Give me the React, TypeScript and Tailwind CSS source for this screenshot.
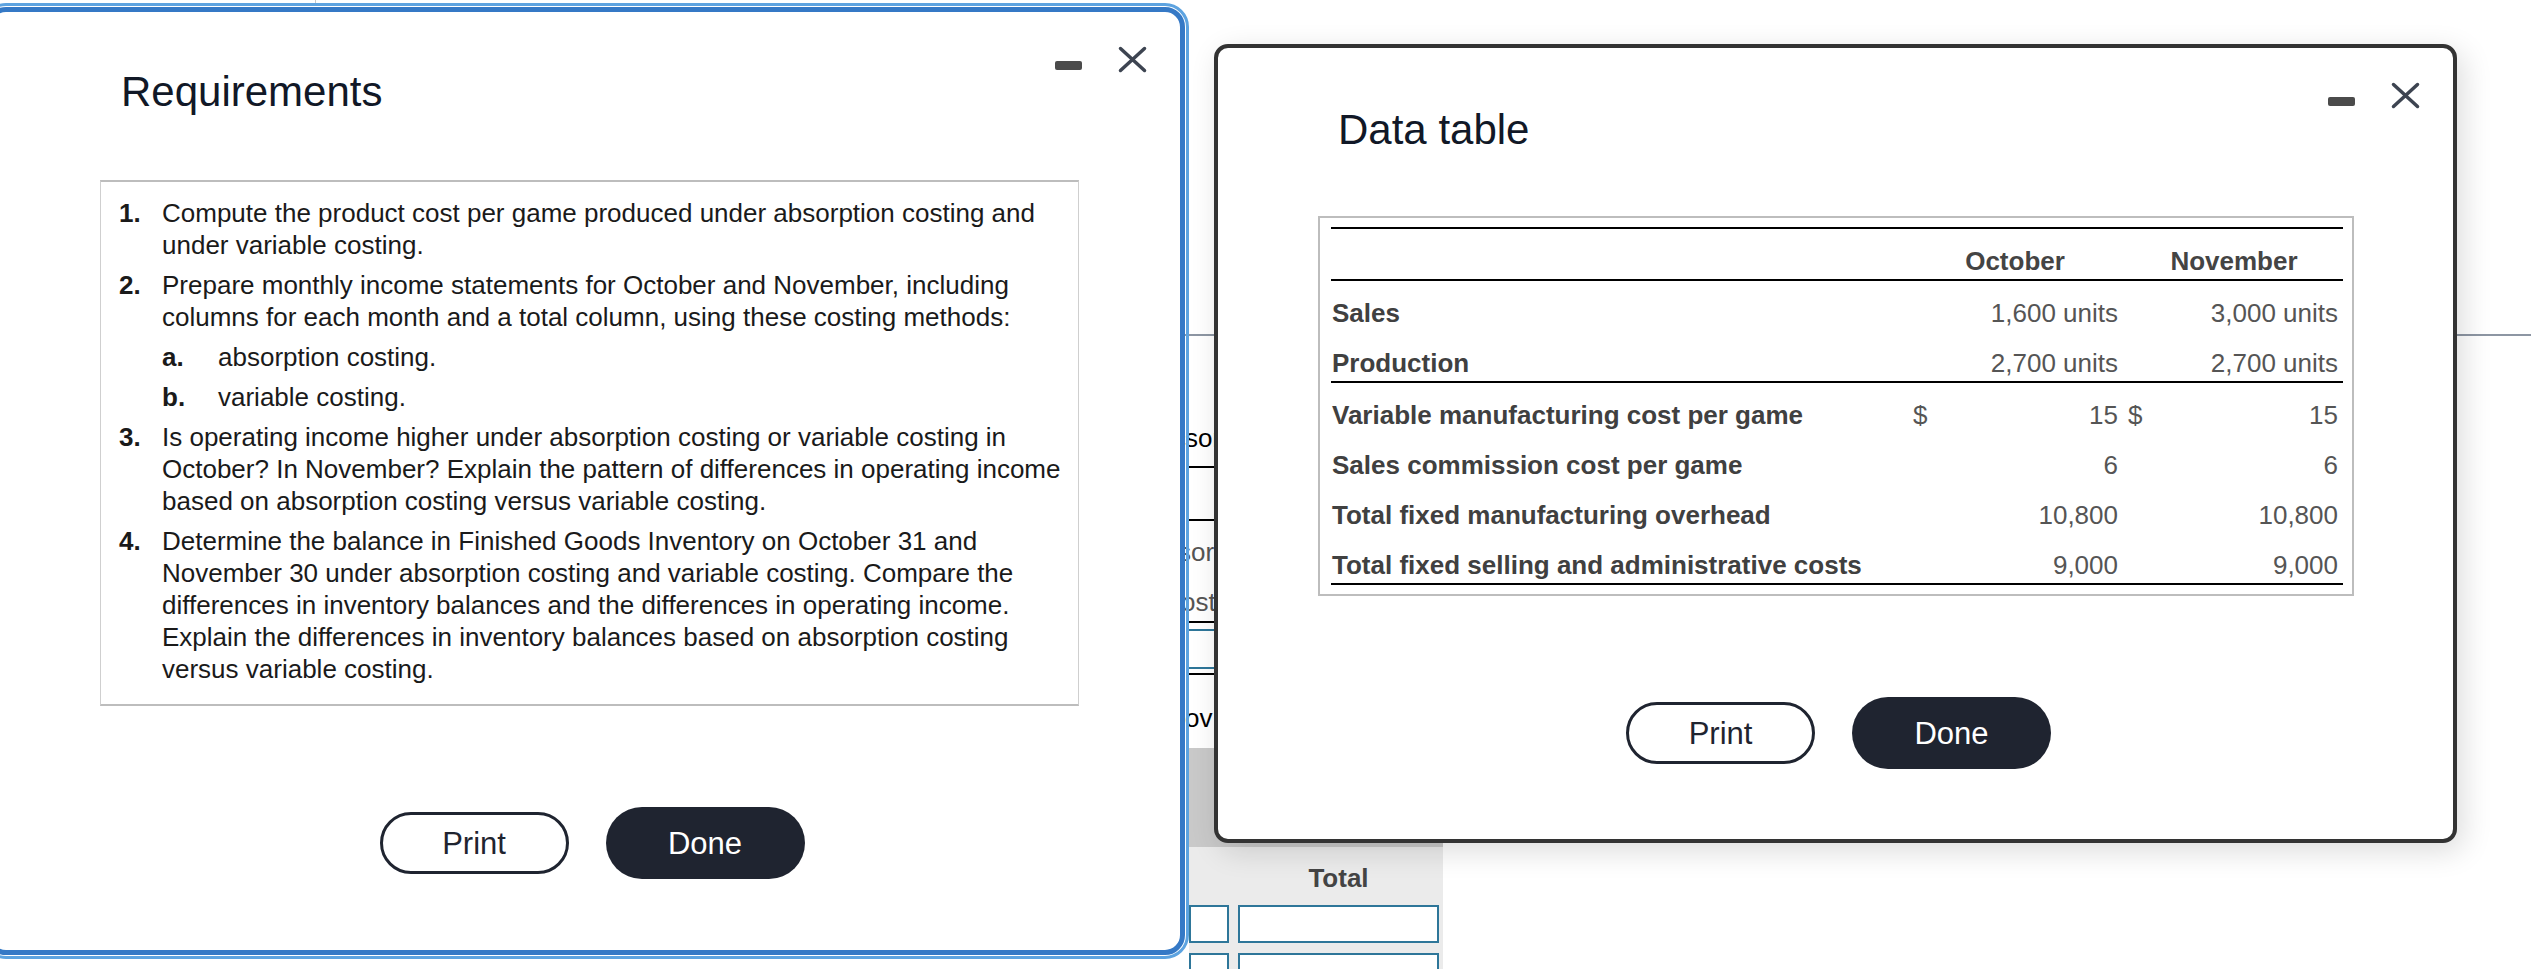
import React from 'react'

const REQUIREMENTS = [
  {
    n: '1.',
    text: 'Compute the product cost per game produced under absorption costing and under variable costing.',
  },
  {
    n: '2.',
    text: 'Prepare monthly income statements for October and November, including columns for each month and a total column, using these costing methods:',
    sub: [
      ['a.', 'absorption costing.'],
      ['b.', 'variable costing.'],
    ],
  },
  {
    n: '3.',
    text: 'Is operating income higher under absorption costing or variable costing in October? In November? Explain the pattern of differences in operating income based on absorption costing versus variable costing.',
  },
  {
    n: '4.',
    text: 'Determine the balance in Finished Goods Inventory on October 31 and November 30 under absorption costing and variable costing. Compare the differences in inventory balances and the differences in operating income. Explain the differences in inventory balances based on absorption costing versus variable costing.',
  },
]

const ROWS = [
  { label: 'Sales', oct: '1,600 units', nov: '3,000 units' },
  { label: 'Production', oct: '2,700 units', nov: '2,700 units', rule: true },
  { label: 'Variable manufacturing cost per game', oct: '15', nov: '15', dollar: true },
  { label: 'Sales commission cost per game', oct: '6', nov: '6' },
  { label: 'Total fixed manufacturing overhead', oct: '10,800', nov: '10,800' },
  { label: 'Total fixed selling and administrative costs', oct: '9,000', nov: '9,000' },
]

function CloseIcon() {
  return (
    <svg width="29" height="27" viewBox="0 0 29 27" fill="none" stroke="#3d4451" strokeWidth="3.5" strokeLinecap="round">
      <path d="M2.5 2.5 L26.5 24.5 M26.5 2.5 L2.5 24.5" />
    </svg>
  )
}

function Buttons({ shift }: { shift: string }) {
  return (
    <div className={`flex items-center justify-center gap-[37px] ${shift}`}>
      <button className="h-[62px] w-[189px] rounded-full border-[3px] border-[#1f2430] bg-white text-[31px] leading-none text-[#1f2430]">
        Print
      </button>
      <button className="h-[72px] w-[199px] rounded-full bg-[#1f2430] text-[31px] leading-none text-white">
        Done
      </button>
    </div>
  )
}

function Background() {
  return (
    <div className="flex h-full flex-col">
      <div className="h-[334px] shrink-0">
        <div className="ml-[315px] h-[3px] w-px bg-[#c8c8c8]" />
      </div>
      <div className="h-[2px] shrink-0 bg-[#8d96a3]" />
      <div className="flex flex-1">
        <div className="flex w-[1189px] shrink-0 flex-col justify-end">
          <div className="flex h-[9px]">
            <div className="ml-[315px] w-px bg-[#c8c8c8]" />
            <div className="ml-[37px] w-[391px] border-x-2 border-t-2 border-[#2e7699]" />
            <div className="ml-[2px] w-[2px] bg-[#9bb8c9]" />
            <div className="ml-[5px] w-[2px] bg-[#9bb8c9]" />
            <div className="ml-[226px] w-[2px] bg-[#9bb8c9]" />
            <div className="ml-[6px] w-[2px] bg-[#9bb8c9]" />
          </div>
        </div>
        <div className="flex w-[254px] shrink-0 flex-col text-[26px] leading-[30px]">
          <div className="-ml-[4px] mt-[87px] text-black">son</div>
          <div className="mt-[13px] h-[2px] bg-black" />
          <div className="mt-[51px] h-[2px] bg-black" />
          <div className="-ml-[11px] mt-[16px] text-[#555]">sor</div>
          <div className="-ml-[21px] mt-[20px] text-[#555]">cost</div>
          <div className="mt-[4px] h-[2px] bg-black" />
          <div className="mt-[6px] h-[2px] bg-[#2e7699]" />
          <div className="mt-[36px] h-[2px] bg-[#2e7699]" />
          <div className="mt-[4px] h-[2px] bg-black" />
          <div className="-ml-[4px] mt-[28px] text-black">ov</div>
          <div className="mt-[15px] h-[99px] bg-[#c9c9c9]" />
          <div className="flex flex-1 bg-[#ebebeb]">
            <div className="flex w-[49px] flex-col gap-[10px] pt-[58px]">
              <div className="h-[38px] w-[40px] border-2 border-[#2e7699] bg-white" />
              <div className="h-[38px] w-[40px] border-2 border-[#2e7699] bg-white" />
            </div>
            <div className="flex w-[201px] flex-col">
              <div className="pt-[16px] text-center font-bold text-[#444]">Total</div>
              <div className="mt-[12px] h-[38px] border-2 border-[#2e7699] bg-white" />
              <div className="mt-[10px] h-[38px] border-2 border-[#2e7699] bg-white" />
            </div>
          </div>
        </div>
      </div>
    </div>
  )
}

function RequirementsDialog() {
  return (
    <div className="absolute left-[-14px] top-[7px] h-[948px] w-[1199px] rounded-[20px] border-[5px] border-[#3579c6] bg-white outline-[3px] outline-offset-[1px] outline-[#5da3e0]">
      <div className="absolute right-[98px] top-[49px] h-[9px] w-[27px] rounded-[2px] bg-[#4b4b4b]" />
      <div className="absolute right-[33px] top-[34px]">
        <CloseIcon />
      </div>

      <h2 className="ml-[130px] pt-[59px] text-[42px] leading-[42px] text-[#111827]">Requirements</h2>

      <div className="ml-[109px] mt-[67px] w-[979px] border-x border-y-2 border-x-[#cfcfcf] border-y-[#bdbdbd] pb-[19px] pl-[18px] pr-[4px] pt-[15px] text-[26px] leading-[32px] text-[#1a1a1a]">
        <div className="flex flex-col gap-[8px]">
          {REQUIREMENTS.map((r) => (
            <div key={r.n} className="flex">
              <span className="w-[43px] shrink-0 font-bold">{r.n}</span>
              <div className="flex-1">
                <p>{r.text}</p>
                {r.sub && (
                  <div className="mt-[8px] flex flex-col gap-[8px]">
                    {r.sub.map(([k, t]) => (
                      <div key={k} className="flex">
                        <span className="w-[56px] shrink-0 font-bold">{k}</span>
                        <span>{t}</span>
                      </div>
                    ))}
                  </div>
                )}
              </div>
            </div>
          ))}
        </div>
      </div>

      <div className="mt-[101px]">
        <Buttons shift="pl-[13px]" />
      </div>
    </div>
  )
}

const COLS = 'grid grid-cols-[574px_40px_180px_30px_188px]'

function DataTableDialog() {
  return (
    <div className="absolute left-[1214px] top-[44px] h-[799px] w-[1243px] rounded-[14px] border-4 border-[#333] bg-white shadow-[6px_8px_30px_rgba(0,0,0,0.14)]">
      <div className="absolute right-[98px] top-[49px] h-[9px] w-[27px] rounded-[2px] bg-[#4b4b4b]" />
      <div className="absolute right-[33px] top-[34px]">
        <CloseIcon />
      </div>

      <h2 className="ml-[120px] pt-[61px] text-[42px] leading-[42px] text-[#111827]">Data table</h2>

      <div className="ml-[100px] mt-[65px] w-[1036px] border-2 border-[#bdbdbd] pb-[9px] pl-[11px] pr-[9px] pt-[9px] text-[26px] leading-[30px]">
        <div className="border-y-2 border-black">
          <div className={`${COLS} h-[52px] border-b-2 border-black pt-[17px] font-bold text-[#444]`}>
            <div />
            <div className="col-span-2 text-center">October</div>
            <div className="col-span-2 text-center">November</div>
          </div>
          {ROWS.map((r) => (
            <div key={r.label} className={`${COLS} ${r.rule ? 'h-[52px] border-b-2 border-black' : 'h-[50px]'} pt-[17px] text-[#555]`}>
              <div className="pl-px font-bold text-[#404040]">{r.label}</div>
              <div className="pl-[8px]">{r.dollar ? '$' : ''}</div>
              <div className="pr-[7px] text-right">{r.oct}</div>
              <div className="pl-[3px]">{r.dollar ? '$' : ''}</div>
              <div className="pr-[5px] text-right">{r.nov}</div>
            </div>
          ))}
        </div>
      </div>

      <div className="mt-[101px]">
        <Buttons shift="pl-[6px]" />
      </div>
    </div>
  )
}

export default function App() {
  return (
    <div className="relative h-[969px] w-[2531px] overflow-hidden bg-white font-['Liberation_Sans',Arial,sans-serif]">
      <Background />
      <RequirementsDialog />
      <DataTableDialog />
    </div>
  )
}
